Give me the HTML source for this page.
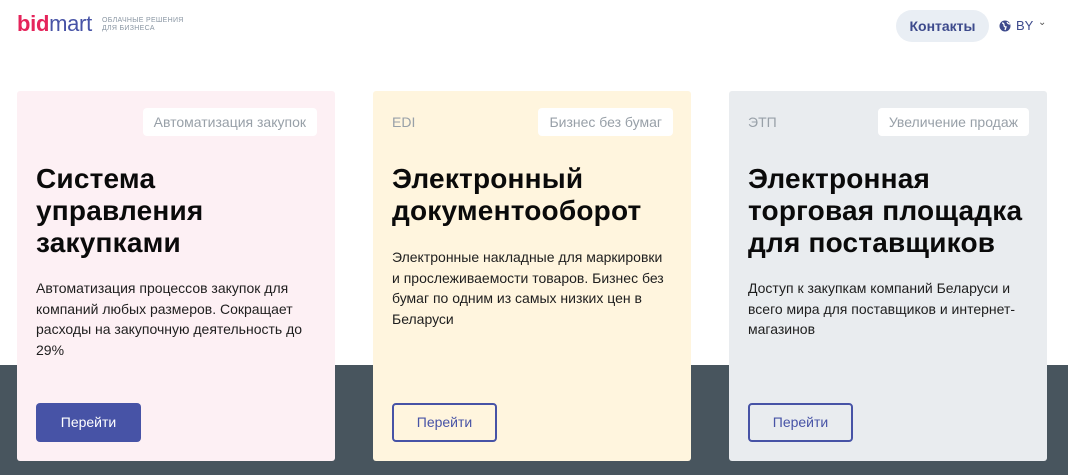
<!DOCTYPE html>
<html><head><meta charset="utf-8"><style>
*{margin:0;padding:0;box-sizing:border-box}
body{width:1068px;height:475px;overflow:hidden;background:#fff;font-family:"Liberation Sans",sans-serif;position:relative}
.band{position:absolute;left:0;top:365px;width:1068px;height:110px;background:#48555e}
.card{position:absolute;top:91px;width:318px;height:370px;border-radius:3px}
.tag{position:absolute;top:17px;right:18px;height:28px;padding:0 11px;background:#fff;border-radius:4px;font-size:14px;line-height:28px;color:#98a0a8}
.lbl{position:absolute;top:17px;left:19px;font-size:14px;line-height:28px;color:#98a0a8}
h2{position:absolute;left:19px;top:72px;font-size:28px;line-height:32px;font-weight:bold;color:#0a0a0a;width:285px;letter-spacing:0.2px}
p{position:absolute;left:19px;font-size:14px;line-height:20.5px;color:#1e1e1e;width:278px}
.btn{position:absolute;left:19px;top:312px;width:105px;height:39px;border-radius:4px;font-size:14px;line-height:39px;text-align:center}
.f{background:#4753a6;color:#fff}
.o{border:2px solid #4753a6;color:#4753a6;line-height:35px}
</style></head><body>
<div style="position:absolute;left:17px;top:11px;font-size:22px;line-height:26px;letter-spacing:-0.3px"><span style="color:#e5245b;font-weight:bold">bid</span><span style="color:#4753a6">mart</span></div>
<div style="position:absolute;left:102px;top:17px;font-size:7px;line-height:8px;color:#8a96a3;letter-spacing:0.3px">ОБЛАЧНЫЕ РЕШЕНИЯ<br>ДЛЯ БИЗНЕСА</div>
<div style="position:absolute;left:896px;top:10px;width:93px;height:32px;border-radius:16px;background:#e9eef4;color:#3d4a8c;font-weight:bold;font-size:14px;line-height:32px;text-align:center">Контакты</div>
<svg style="position:absolute;left:999px;top:20px" width="12" height="12" viewBox="0 0 12 12"><circle cx="6" cy="6" r="5.5" fill="#3d4a8c"/><path d="M3 3q2 0 2 2t2 2l-1 3M8 2q1 2 3 2" stroke="#fff" stroke-width="1.3" fill="none"/></svg>
<div style="position:absolute;left:1016px;top:18px;font-size:13px;color:#3d4a8c">BY</div>
<div style="position:absolute;left:1038px;top:17px;font-size:10px;color:#555">⌄</div>
<div class="band"></div>
<div class="card" style="left:17px;background:#fdf0f4">
<div class="tag">Автоматизация закупок</div>
<h2 style="width:200px">Система управления закупками</h2>
<p style="top:187px">Автоматизация процессов закупок для компаний любых размеров. Сокращает расходы на закупочную деятельность до 29%</p>
<div class="btn f">Перейти</div></div>
<div class="card" style="left:373px;background:#fff5de">
<div class="lbl">EDI</div><div class="tag">Бизнес без бумаг</div>
<h2>Электронный документооборот</h2>
<p style="top:156px;width:276px">Электронные накладные для маркировки и прослеживаемости товаров. Бизнес без бумаг по одним из самых низких цен в Беларуси</p>
<div class="btn o">Перейти</div></div>
<div class="card" style="left:729px;background:#e9ecef">
<div class="lbl">ЭТП</div><div class="tag">Увеличение продаж</div>
<h2>Электронная торговая площадка для поставщиков</h2>
<p style="top:187px">Доступ к закупкам компаний Беларуси и всего мира для поставщиков и интернет-магазинов</p>
<div class="btn o">Перейти</div></div>
</body></html>
